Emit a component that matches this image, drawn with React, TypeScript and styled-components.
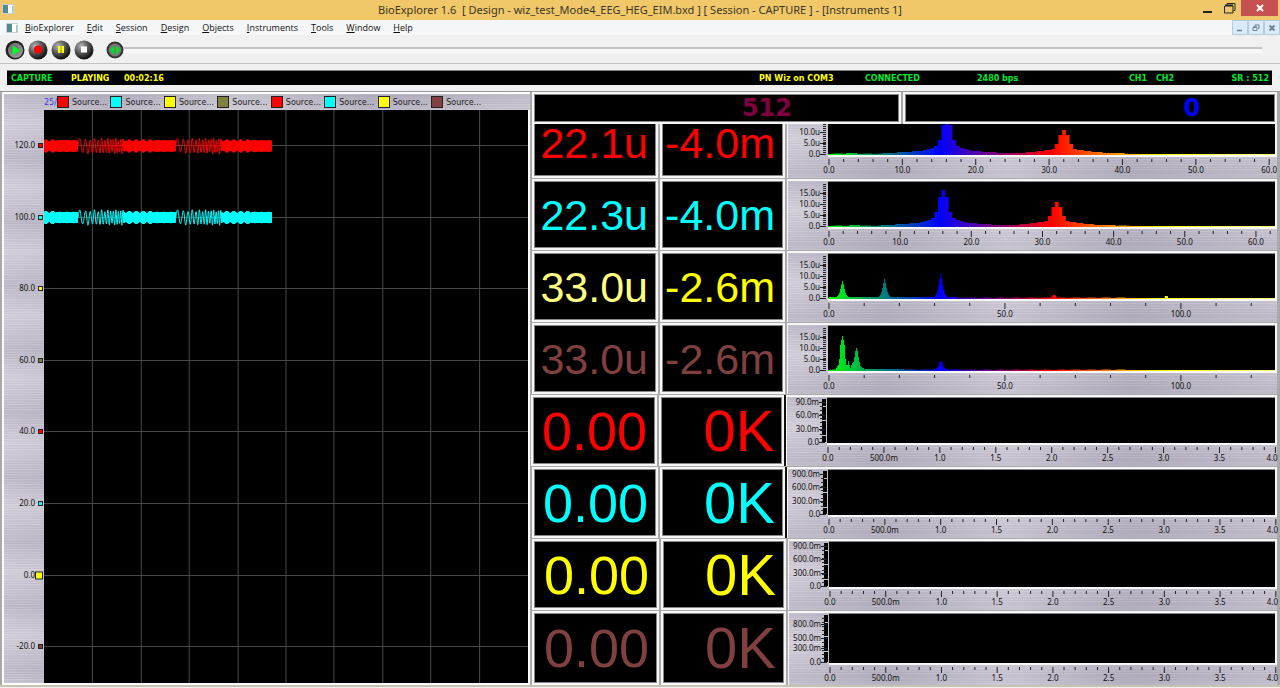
import React from 'react';
import styled, { createGlobalStyle, css } from 'styled-components';

const GlobalStyle = createGlobalStyle`
  * { box-sizing: border-box; }
  body {
    margin: 0;
    background: #f0f0f0;
    font-family: 'Open Sans', 'Noto Sans', sans-serif;
    color: #222;
  }
`;

const metal = css`
  background-color: #c6c1cf;
  background-image:
    linear-gradient(90deg, rgba(255, 255, 255, 0.12), rgba(120, 115, 135, 0.1) 20%, rgba(255, 255, 255, 0.2) 45%, rgba(120, 115, 135, 0.12) 70%, rgba(255, 255, 255, 0.1)),
    repeating-linear-gradient(180deg, rgba(255, 255, 255, 0.1) 0 1px, rgba(90, 85, 110, 0.04) 1px 3px, rgba(255, 255, 255, 0.04) 3px 4px, rgba(90, 85, 110, 0.07) 4px 5px),
    repeating-linear-gradient(180deg, rgba(90, 85, 110, 0.12) 0, rgba(255, 255, 255, 0.16) 29px, rgba(90, 85, 110, 0.12) 64px);
`;

/* ---------- window chrome ---------- */

const TitleBar = styled.header`
  display: grid;
  grid-template-columns: 100px 1fr 100px;
  align-items: start;
  height: 20px;
  background: #f0c869;
`;

const AppIcon = styled.svg`
  display: block;
  width: 12px;
  height: 10px;
`;

const TitleIconSlot = styled.div`
  padding: 4px 0 0 2px;
`;

const Title = styled.h1`
  margin: 0;
  font: 400 11px/20px 'Noto Sans', 'Open Sans', sans-serif;
  text-align: center;
  white-space: pre;
  color: #3b3526;
`;

const WindowButtons = styled.div`
  display: flex;
  justify-content: flex-end;
  padding-right: 2px;
`;

const WindowButton = styled.button<{ $close?: boolean }>`
  display: flex;
  align-items: center;
  justify-content: center;
  width: ${(p) => (p.$close ? 37 : 22)}px;
  height: 16px;
  padding: 0;
  border: 0;
  background: ${(p) => (p.$close ? '#c75050' : 'transparent')};
`;

const MenuBar = styled.nav`
  display: flex;
  align-items: center;
  height: 15px;
  padding-left: 6px;
  background: #f5f6f7;
`;

const MenuList = styled.div`
  display: flex;
  flex: 1;
  gap: 13px;
  padding-left: 7px;
`;

const MenuItem = styled.button`
  padding: 0;
  border: 0;
  background: none;
  font: 400 9px/15px 'Open Sans', sans-serif;
  color: #111;

  &::first-letter {
    text-decoration: underline;
  }
`;

const MdiButton = styled.button`
  display: flex;
  align-items: center;
  justify-content: center;
  width: 16px;
  height: 15px;
  padding: 0;
  border: 1px solid #b4cbe0;
  background: #dcebf9;
`;

/* ---------- transport ---------- */

const Toolbar = styled.div`
  display: flex;
  align-items: center;
  gap: 3px;
  height: 29px;
  padding: 2px 18px 0 5px;
  border-bottom: 1px solid #c2c2c2;
`;

const RoundButton = styled.button`
  display: block;
  width: 20px;
  height: 20px;
  padding: 0;
  border: 0;
  background: none;
`;

const knob = `url("data:image/svg+xml,%3Csvg xmlns='http://www.w3.org/2000/svg' viewBox='0 0 18 18'%3E%3Ccircle cx='9' cy='9' r='8.5' fill='%23333'/%3E%3Ccircle cx='9' cy='9' r='6.500' fill='%23777'/%3E%3Cpath d='M7.500 5v8L4.500 9zM10.500 5v8L13.500 9z' fill='%2300e020' stroke='%2300e020'/%3E%3C/svg%3E")`;

const Seek = styled.input`
  appearance: none;
  flex: 1;
  height: 18px;
  margin: 0 0 0 9px;
  background: linear-gradient(#f0f0f0 6px, #c4c4c4 6px 8px, #f8f8f8 8px 12px, #f0f0f0 12px);

  &::-webkit-slider-thumb {
    appearance: none;
    width: 18px;
    height: 18px;
    border-radius: 9px;
    background: #f0f0f0 ${knob} center / 18px 18px no-repeat;
  }
`;

const StatusWrap = styled.div`
  padding: 6px 8px 6px 7px;
  border-bottom: 1px solid #979797;
`;

const StatusBar = styled.div`
  display: grid;
  grid-template-columns: 60fr 53fr 635fr 106fr 112fr 152fr 27fr 27fr 86fr;
  height: 15px;
  padding: 0 3px 0 4px;
  border-top: 1px solid #7c8080;
  background: #000;
  font: 700 8px/15px 'DejaVu Sans', sans-serif;
  white-space: nowrap;
`;

const StatusItem = styled.span<{ $warn?: boolean }>`
  color: ${(p) => (p.$warn ? '#ffff00' : '#00e832')};

  &:last-child {
    text-align: right;
  }
`;

/* ---------- panes ---------- */

const Workspace = styled.main`
  display: grid;
  grid-template-columns: minmax(0, 531fr) minmax(0, 749fr);
  border-bottom: 2px solid #c9c3b4;
  background: #a9a9a9;
`;

const TracePane = styled.section`
  ${metal}
  margin: 0 1px 0 2px;
  border: 2px solid #fbfbfb;
  border-right-width: 0;
`;

const Legend = styled.div`
  display: flex;
  align-items: center;
  height: 16px;
  padding-left: 40px;
  font: 400 8px/15px 'DejaVu Sans', sans-serif;
  color: #222;
`;

const LegendDate = styled.span`
  width: 13px;
  white-space: nowrap;
  color: #3a3af0;
`;

const LegendItem = styled.span`
  display: flex;
  align-items: center;
  gap: 3px;
  flex: 0 0 11%;
  white-space: nowrap;
`;

const Swatch = styled.i<{ $color: string }>`
  width: 12px;
  height: 12px;
  border: 1px solid #222;
  background: ${(p) => p.$color};
`;

const TraceBody = styled.div`
  display: grid;
  grid-template-columns: 40px minmax(0, 1fr);
`;

const TraceAxis = styled.svg`
  display: block;
  width: 40px;
  height: 573px;
`;

const TracePlot = styled.svg`
  display: block;
  width: 100%;
  height: 573px;
  border-right: 2px solid #fbfbfb;
  background: #000;
`;

const InstrumentPane = styled.section`
  display: flex;
  flex-direction: column;
  padding-right: 3px;
`;

const CounterRow = styled.div`
  display: grid;
  grid-template-columns: minmax(0, 369fr) minmax(0, 374fr);
  gap: 2px;
  padding-left: 1px;
  height: 32px;
`;

const Screen = styled.div<{ $color: string }>`
  display: flex;
  align-items: center;
  justify-content: flex-end;
  overflow: hidden;
  border: 2px solid #f6f6f6;
  outline: 1px solid #8a8a8a;
  outline-offset: -3px;
  background: #000;
  color: ${(p) => p.$color};
`;

const Counter = styled(Screen)<{ $inset: string }>`
  padding-right: ${(p) => p.$inset};
  font: 700 24px/26px 'DejaVu Sans', sans-serif;
`;

const Readout = styled(Screen)<{ $size: number }>`
  padding-right: 8px;
  font-family: 'Liberation Sans', sans-serif;
  font-size: ${(p) => p.$size}px;
  line-height: 66px;
`;

const ClippedRow = styled.div`
  display: flex;
  flex-direction: column;
  justify-content: flex-end;
  height: 55px;
  overflow: hidden;
`;

const InstrumentRow = styled.div<{ $lead: number; $cols: string; $gutter?: boolean; $tall?: boolean }>`
  display: grid;
  grid-template-columns: ${(p) => p.$cols};
  gap: 2px;
  flex: none;
  height: ${(p) => (p.$tall ? 74 : 71)}px;
  margin-bottom: ${(p) => (p.$tall ? 0 : 1)}px;
  padding-left: ${(p) => p.$lead}px;
  background: ${(p) => (p.$gutter ? 'linear-gradient(90deg, #a9a9a9 30%, #111 30%)' : 'none')};
`;

const Spectrum = styled.div`
  ${metal}
  display: grid;
  grid-template-columns: 40px minmax(0, 1fr);
  border-top: 2px solid #f6f6f6;
  border-left: 1px solid #f6f6f6;
`;

const YAxis = styled.svg`
  display: block;
  width: 40px;
  height: 60px;
  overflow: visible;
`;

const PlotColumn = styled.div`
  display: flex;
  flex-direction: column;
`;

const Plot = styled.svg<{ $h: number }>`
  display: block;
  width: 100%;
  height: ${(p) => p.$h + 3}px;
  border: solid #f6f6f6;
  border-width: 0 2px 2px 0;
  background: #000;
  box-shadow: inset 0 1px #888;
`;

const XAxis = styled.svg`
  display: block;
  width: 100%;
  height: 18px;
  overflow: visible;
`;

const AxisText = styled.text`
  font: 400 8px 'Noto Sans', 'Open Sans', sans-serif;
  fill: #111;
`;

/* ---------- data ---------- */

const RED = '#ff0000';
const CYAN = '#00ffff';
const YELLOW = '#ffff00';
const BROWN = '#804040';
const OLIVE = '#808040';

const legend = [RED, CYAN, YELLOW, OLIVE, RED, CYAN, YELLOW, BROWN];

const levels = [
  { label: '120.0', color: RED },
  { label: '100.0', color: CYAN },
  { label: '80.0', color: YELLOW },
  { label: '60.0', color: OLIVE },
  { label: '40.0', color: RED },
  { label: '20.0', color: CYAN },
  { label: '0.0', color: YELLOW },
  { label: '-20.0', color: BROWN },
];

const levelY = (i: number) => 35 + i * 71.6;

function sweep(mid: number): string {
  const pts: string[] = [];
  const period = 98;
  for (let x = 0; x <= 228; x += 0.25) {
    const u = (x + period - 34) % period;
    const phase = 0.14 * u + 0.0034 * u * u;
    const dense = u > 46;
    const amp = (dense ? 5.4 : 6.8) + (u < 76 ? 1 : 0.2) * Math.sin(x * 0.9);
    const wave = dense ? (Math.round(x * 4) % 2 ? 1 : -1) : Math.sin(phase * 2 * Math.PI);
    pts.push(`${x.toFixed(2)},${(mid - wave * amp).toFixed(2)}`);
  }
  return pts.join(' ');
}

type Peak = { x: number; h: number[] };

const alphaPeak = [37, 30, 15, 9, 7, 6, 5, 4, 4, 4, 3, 3, 3, 3, 2, 2, 2, 2];
const betaPeak = [25, 20, 11, 6, 5, 5, 4, 4, 3, 3, 3, 2, 2, 2, 2, 2, 2];
const sharp = (h: number) => [h, h * 0.8, h * 0.55, h * 0.35, h * 0.22, h * 0.16, h * 0.1];

function bars(peaks: Peak[], step: number, floor: number, base: number): string {
  const out: string[] = [];
  for (let i = 0; i * step < 446; i += 1) {
    const x = i * step;
    let h = x < 300 ? floor + 0.5 * Math.abs(Math.sin(x * 0.21)) : 1;
    for (const p of peaks) {
      const d = Math.abs(i - Math.floor(p.x / step));
      if (d < p.h.length) h = Math.max(h, p.h[d]);
    }
    out.push(`M${x.toFixed(2)} ${base}v${(-h).toFixed(1)}h${(step + 0.1).toFixed(2)}V${base}z`);
  }
  return out.join('');
}

type SpectrumSpec = {
  id: string;
  plotHeight: number;
  yTicks: [string, number][];
  xMax: number;
  xMajor: number;
  xMinor: number;
  solidRuler?: boolean;
  peaks?: Peak[];
  step?: number;
  floor?: number;
};

const microTicks: [string, number][] = [['15.0u', 33], ['10.0u', 22], ['5.0u', 11], ['0.0', 0]];
const milliTicks: [string, number][] = [['900.0m', 40], ['600.0m', 27], ['300.0m', 13], ['0.0', 0]];

const spectra: SpectrumSpec[] = [
  { id: 's1', plotHeight: 45, yTicks: microTicks.slice(1), xMax: 61.2, xMajor: 10, xMinor: 2, step: 3.65, floor: 1, peaks: [{ x: 118, h: alphaPeak }, { x: 235, h: betaPeak }, { x: 25, h: [2, 2] }] },
  { id: 's2', plotHeight: 45, yTicks: microTicks, xMax: 63.1, xMajor: 10, xMinor: 2, step: 3.54, floor: 1, peaks: [{ x: 115, h: alphaPeak }, { x: 228, h: betaPeak }, { x: 25, h: [2, 2] }] },
  { id: 's3', plotHeight: 45, yTicks: microTicks, xMax: 127.6, xMajor: 50, xMinor: 10, step: 1, floor: 1, peaks: [{ x: 14, h: sharp(18) }, { x: 56, h: sharp(20) }, { x: 112, h: sharp(25) }, { x: 225, h: [4, 4, 3, 1] }, { x: 337, h: [3, 3, 1] }, { x: 48, h: Array(48).fill(2) }, { x: 104, h: Array(26).fill(2) }] },
  { id: 's4', plotHeight: 45, yTicks: microTicks, xMax: 127.6, xMajor: 50, xMinor: 10, step: 1, floor: 1, peaks: [{ x: 14, h: [35, 31, 26, 12, 6, 5, 3] }, { x: 28, h: [23, 20, 14, 9, 5, 4, 3, 3] }, { x: 20, h: [10, 6] }, { x: 24, h: [8, 6] }, { x: 112, h: [10, 9, 6, 4, 3, 2, 2, 2] }, { x: 56, h: Array(20).fill(2) }] },
  { id: 's5', plotHeight: 45, yTicks: [['90.0m', 40], ['60.0m', 27], ['30.0m', 13], ['0.0', 0]], xMax: 4.02, xMajor: 0.5, xMinor: 0.1, solidRuler: true },
  { id: 's6', plotHeight: 45, yTicks: milliTicks, xMax: 4.02, xMajor: 0.5, xMinor: 0.1, solidRuler: true },
  { id: 's7', plotHeight: 45, yTicks: milliTicks, xMax: 4.02, xMajor: 0.5, xMinor: 0.1, solidRuler: true },
  { id: 's8', plotHeight: 49, yTicks: [['800.0m', 38], ['500.0m', 24], ['300.0m', 14], ['0.0', 0]], xMax: 4.02, xMajor: 0.5, xMinor: 0.1, solidRuler: true },
];

const standardCols = 'minmax(0, 126fr) minmax(0, 125fr) minmax(0, 490fr)';
const shiftedCols = 'minmax(0, 127fr) minmax(0, 125fr) minmax(0, 489fr)';

const rows = [
  { color: RED, value: '22.1u', second: '-4.0m' },
  { color: CYAN, value: '22.3u', second: '-4.0m' },
  { color: YELLOW, value: '33.0u', second: '-2.6m', valueColor: '#ffff80' },
  { color: BROWN, value: '33.0u', second: '-2.6m' },
  { color: RED, value: '0.00', second: '0K', impedance: true, gutter: true },
  { color: CYAN, value: '0.00', second: '0K', impedance: true, gutter: true },
  { color: YELLOW, value: '0.00', second: '0K', impedance: true },
  { color: BROWN, value: '0.00', second: '0K', impedance: true },
];

/* ---------- components ---------- */

function WindowIcon() {
  return (
    <AppIcon viewBox="0 0 12 10" aria-hidden="true">
      <rect x="0.5" y="0.5" width="11" height="9" fill="#fdfdfd" stroke="#c9cfd2" />
      <rect x="1" y="1" width="5" height="8" fill="#4e9186" />
      <rect x="1" y="1" width="2" height="8" fill="#5a7f9f" />
      <rect x="10" y="2" width="1" height="7" fill="#9ccabb" />
    </AppIcon>
  );
}

function TransportButton({ label, children }: { label: string; children: React.ReactNode }) {
  const id = `ball-${label}`;
  const play = label === 'Play';
  return (
    <RoundButton aria-label={label}>
      <svg width="20" height="20" viewBox="0 0 20 20">
        <defs>
          <radialGradient id={id} cx="0.35" cy="0.3" r="0.75">
            <stop offset="0" stopColor={play ? '#6a6a6a' : '#b8b8b8'} />
            <stop offset="0.5" stopColor={play ? '#808080' : '#555'} />
            <stop offset="1" stopColor={play ? '#999' : '#080808'} />
          </radialGradient>
        </defs>
        <circle cx="10" cy="10" r="9.5" fill={play ? '#222' : `url(#${id})`} />
        {play && <circle cx="10.500" cy="10.500" r="7.500" fill={`url(#${id})`} />}
        {children}
      </svg>
    </RoundButton>
  );
}

function formatX(v: number, major: number): string {
  return major === 0.5 && Math.abs(v - 0.5) < 0.01 ? '500.0m' : v.toFixed(1);
}

function SpectrumChart({ spec }: { spec: SpectrumSpec }) {
  const base = spec.plotHeight;
  const ticks: { v: number; major: boolean }[] = [];
  const per = Math.round(spec.xMajor / spec.xMinor);
  for (let i = 0; i * spec.xMinor <= spec.xMax; i += 1) {
    ticks.push({ v: i * spec.xMinor, major: i % per === 0 });
  }
  const rulerStep = spec.solidRuler ? 4 : 2;
  const ruler = Array.from({ length: Math.floor(base / rulerStep) }, (_, i) => base - i * rulerStep);
  return (
    <Spectrum>
      <YAxis aria-hidden="true">
        {spec.solidRuler && (
          <>
            <rect x="35" y="2" width="4" height={base - 2} fill="#000" />
            <path d="M35 9.500h4M35 23.500h4M35 38.500h4" stroke="#c6c1cf" />
          </>
        )}
        {ruler.map((y) => (
          <rect key={y} x={spec.solidRuler ? 33 : 35} y={y} width="3" height="1" fill="#222" />
        ))}
        {spec.yTicks.map(([label, up]) => (
          <g key={label}>
            <rect x="32" y={base - up} width="6" height="1" fill="#222" />
            <AxisText x="32" y={base - up + 3} textAnchor="end">{label}</AxisText>
          </g>
        ))}
      </YAxis>
      <PlotColumn>
        <Plot $h={base} viewBox={`0 0 446 ${base + 1}`} preserveAspectRatio="none">
          {spec.peaks && (
            <>
              <defs>
                <linearGradient id={spec.id} gradientUnits="userSpaceOnUse" x1="0" x2="446" y1="0" y2="0">
                  <stop offset="0" stopColor="#00ff00" />
                  <stop offset="0.125" stopColor="#008080" />
                  <stop offset="0.25" stopColor="#0000ff" />
                  <stop offset="0.375" stopColor="#800080" />
                  <stop offset="0.5" stopColor="#ff0000" />
                  <stop offset="0.75" stopColor="#ffff00" />
                  <stop offset="1" stopColor="#ffff80" />
                </linearGradient>
              </defs>
              <path d={bars(spec.peaks, spec.step ?? 1, spec.floor ?? 1, base + 1)} fill={`url(#${spec.id})`} />
            </>
          )}
        </Plot>
        <XAxis>
          {ticks.map(({ v, major }) => {
            const pos = `${(v / spec.xMax) * 100}%`;
            const last = v > 3.99 && spec.xMajor === 0.5;
            return (
              <g key={v} transform="translate(1 0)">
                <line x1={pos} x2={pos} y1="2" y2={major ? 8 : 5} stroke="#222" />
                {major && (
                  <AxisText x={last ? '100%' : pos} y="16" textAnchor={last ? 'end' : 'middle'}>
                    {formatX(v, spec.xMajor)}
                  </AxisText>
                )}
              </g>
            );
          })}
        </XAxis>
      </PlotColumn>
    </Spectrum>
  );
}

function Row({ index }: { index: number }) {
  const r = rows[index];
  return (
    <InstrumentRow
      $lead={index === 4 ? 0 : 1}
      $cols={index > 5 ? shiftedCols : standardCols}
      $gutter={r.gutter}
      $tall={index === 7}
    >
      <Readout $color={r.valueColor ?? r.color} $size={r.impedance ? 54 : 43}>{r.value}</Readout>
      <Readout $color={r.color} $size={r.impedance ? 58 : 43}>{r.second}</Readout>
      <SpectrumChart spec={spectra[index]} />
    </InstrumentRow>
  );
}

export default function App() {
  return (
    <>
      <GlobalStyle />
      <TitleBar>
        <TitleIconSlot><WindowIcon /></TitleIconSlot>
        <Title>{'BioExplorer 1.6  [ Design - wiz_test_Mode4_EEG_HEG_EIM.bxd ] [ Session - CAPTURE ] - [Instruments 1]'}</Title>
        <WindowButtons>
          <WindowButton aria-label="Minimize">
            <svg width="10" height="10" viewBox="0 0 10 10"><path d="M0 9h9" stroke="#222" strokeWidth="2" /></svg>
          </WindowButton>
          <WindowButton aria-label="Restore">
            <svg width="12" height="12" viewBox="0 0 12 12" fill="none" stroke="#222">
              <path d="M3 2.500V1.500h8v7H9.500" /><path d="M1 3.500h8" strokeWidth="2" /><path d="M.5 4v7h8.500V4" />
            </svg>
          </WindowButton>
          <WindowButton aria-label="Close" $close>
            <svg width="8" height="8" viewBox="0 0 8 8"><path d="M1 1l6 6M7 1L1 7" stroke="#fff" strokeWidth="2" /></svg>
          </WindowButton>
        </WindowButtons>
      </TitleBar>

      <MenuBar>
        <WindowIcon />
        <MenuList>
          {['BioExplorer', 'Edit', 'Session', 'Design', 'Objects', 'Instruments', 'Tools', 'Window', 'Help'].map((m) => (
            <MenuItem key={m}>{m}</MenuItem>
          ))}
        </MenuList>
        <MdiButton aria-label="Minimize child window">
          <svg width="8" height="8" viewBox="0 0 8 8"><path d="M1 6.500h5" stroke="#6c7f92" strokeWidth="1.500" /></svg>
        </MdiButton>
        <MdiButton aria-label="Restore child window">
          <svg width="8" height="8" viewBox="0 0 8 8" fill="none" stroke="#6c7f92"><path d="M3 2.500V1h4v3.500H6M1 3.500h4v3H1zM1 3h4" /></svg>
        </MdiButton>
        <MdiButton aria-label="Close child window">
          <svg width="8" height="8" viewBox="0 0 8 8"><path d="M1.500 1.500l5 5M6.500 1.500l-5 5" stroke="#6c7f92" strokeWidth="1.800" /></svg>
        </MdiButton>
      </MenuBar>

      <Toolbar>
        <TransportButton label="Play"><path d="M7.500 5.500v9.500l8-4.500z" fill="#00ff20" /></TransportButton>
        <TransportButton label="Record"><circle cx="10" cy="9.500" r="4" fill="#ff0000" /></TransportButton>
        <TransportButton label="Pause"><path d="M7 6h2.500v7H7zM10.500 6H13v7h-2.500z" fill="#ffff00" /></TransportButton>
        <TransportButton label="Stop"><rect x="7" y="6.500" width="6" height="6" fill="#fff" /></TransportButton>
        <Seek type="range" aria-label="Session position" defaultValue={0} />
      </Toolbar>

      <StatusWrap>
        <StatusBar>
          <StatusItem>CAPTURE</StatusItem>
          <StatusItem $warn>PLAYING</StatusItem>
          <StatusItem $warn>00:02:16</StatusItem>
          <StatusItem $warn>PN Wiz on COM3</StatusItem>
          <StatusItem>CONNECTED</StatusItem>
          <StatusItem>2480 bps</StatusItem>
          <StatusItem>CH1</StatusItem>
          <StatusItem>CH2</StatusItem>
          <StatusItem>SR : 512</StatusItem>
        </StatusBar>
      </StatusWrap>

      <Workspace>
        <TracePane>
          <Legend>
            <LegendDate>25/</LegendDate>
            {legend.map((c, i) => (
              <LegendItem key={i}><Swatch $color={c} />Source...</LegendItem>
            ))}
          </Legend>
          <TraceBody>
            <TraceAxis>
              {levels.map((l, i) => {
                const s = l.label === '0.0' ? 7 : 4;
                return (
                  <g key={l.label}>
                    <AxisText x="31" y={levelY(i) + 3} textAnchor="end">{l.label}</AxisText>
                    <rect x={38.5 - s} y={Math.round(levelY(i)) + 0.5 - s / 2} width={s} height={s} fill={l.color} stroke="#222" />
                  </g>
                );
              })}
            </TraceAxis>
            <TracePlot viewBox="0 0 485 573" preserveAspectRatio="none">
              <path
                d={[...levels.map((_, i) => `M0 ${Math.round(levelY(i)) + 0.5}H485`), ...Array.from({ length: 9 }, (_, i) => `M${Math.round((i + 1) * 48.4) + 0.5} 0V573`)].join('')}
                stroke="#484848"
                fill="none"
              />
              <polyline points={sweep(36)} stroke={RED} fill="none" />
              <polyline points={sweep(107.5)} stroke={CYAN} fill="none" />
            </TracePlot>
          </TraceBody>
        </TracePane>

        <InstrumentPane>
          <CounterRow>
            <Counter $color="#800040" $inset="29%">512</Counter>
            <Counter $color="#0000ff" $inset="20%">0</Counter>
          </CounterRow>
          <ClippedRow><Row index={0} /></ClippedRow>
          {rows.slice(1).map((_, i) => <Row key={i} index={i + 1} />)}
        </InstrumentPane>
      </Workspace>
    </>
  );
}
